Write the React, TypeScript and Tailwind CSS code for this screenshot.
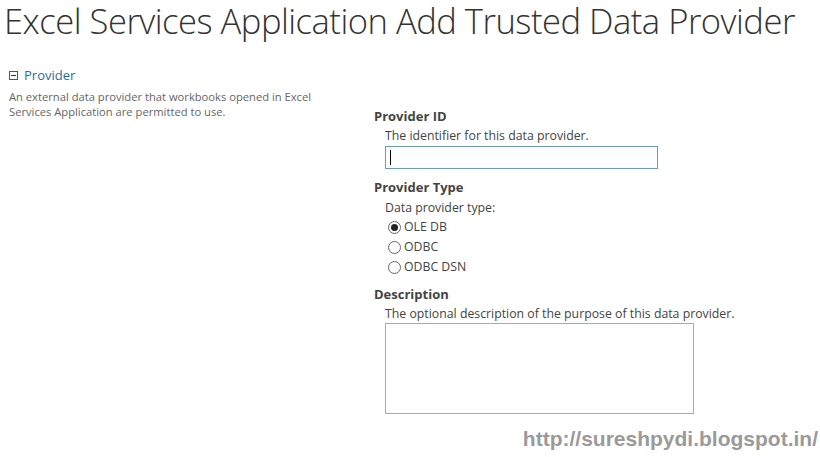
import { useState } from "react";

const body = { fontFamily: '"Open Sans", "Noto Sans", sans-serif' };

function Radio({ label, checked, onSelect }: { label: string; checked: boolean; onSelect: () => void }) {
  return (
    <label className="flex h-5 cursor-pointer items-center gap-[3px] pl-[3px] text-[12.3px] text-[#444]" onClick={onSelect}>
      <span className="flex h-[13px] w-[13px] items-center justify-center rounded-full border border-[#666] bg-white">
        {checked && <span className="h-[7px] w-[7px] rounded-full bg-[#222]" />}
      </span>
      {label}
    </label>
  );
}

export default function App() {
  const [providerType, setProviderType] = useState("OLE DB");

  return (
    <div className="relative h-[457px] w-[820px] overflow-hidden bg-white" style={body}>
      {/* Page title */}
      <h1 className="-mt-[3px] whitespace-nowrap pl-[4px] text-[34.6px] font-light leading-[48px] tracking-[-0.5px] text-[#333]">
        Excel Services Application Add Trusted Data Provider
      </h1>

      <div className="flex pt-[21px]">
        {/* Left: section description */}
        <div className="w-[365px] pl-[9px]">
          <div className="flex items-center gap-[6px] text-[13px] leading-[18px] text-[#1f6f9e]">
            <span className="flex h-[9px] w-[9px] items-center justify-center border border-[#555]">
              <span className="h-px w-[5px] bg-[#333]" />
            </span>
            Provider
          </div>
          <p className="mt-[5px] w-[320px] text-[11.2px] leading-[15px] text-[#666]">
            An external data provider that workbooks opened in Excel Services Application are permitted to use.
          </p>
        </div>

        {/* Right: form fields */}
        <div className="pt-[41px] pl-[9px] text-[#444]">
          <div className="text-[13px] font-bold leading-[18px] text-[#444]">Provider ID</div>
          <div className="pl-[11px]">
            <div className="mt-[2px] text-[12.3px] leading-[17px]">The identifier for this data provider.</div>
            <div className="mt-[2px] flex h-[23px] w-[273px] items-center border border-[#6a9cc0] bg-white px-[4px]">
              <span className="h-[15px] w-px bg-black" />
            </div>
          </div>

          <div className="mt-[9px] text-[13px] font-bold leading-[18px]">Provider Type</div>
          <div className="pl-[11px]">
            <div className="mt-[3px] text-[12.3px] leading-[17px]">Data provider type:</div>
            <div className="mt-[1px] flex flex-col">
              {["OLE DB", "ODBC", "ODBC DSN"].map((t) => (
                <Radio key={t} label={t} checked={providerType === t} onSelect={() => setProviderType(t)} />
              ))}
            </div>
          </div>

          <div className="mt-[8px] text-[13px] font-bold leading-[18px]">Description</div>
          <div className="pl-[11px]">
            <div className="mt-[2px] text-[12.3px] leading-[17px]">The optional description of the purpose of this data provider.</div>
            <div className="mt-[1px] h-[91px] w-[309px] border border-[#aaa] bg-white" />
          </div>
        </div>
      </div>

      {/* Watermark */}
      <div
        className="absolute right-[2px] top-[423px] text-[21px] font-bold text-[#9a9a9a]"
        style={{ fontFamily: '"Liberation Sans", Arial, sans-serif' }}
      >
        http://sureshpydi.blogspot.in/
      </div>
    </div>
  );
}
